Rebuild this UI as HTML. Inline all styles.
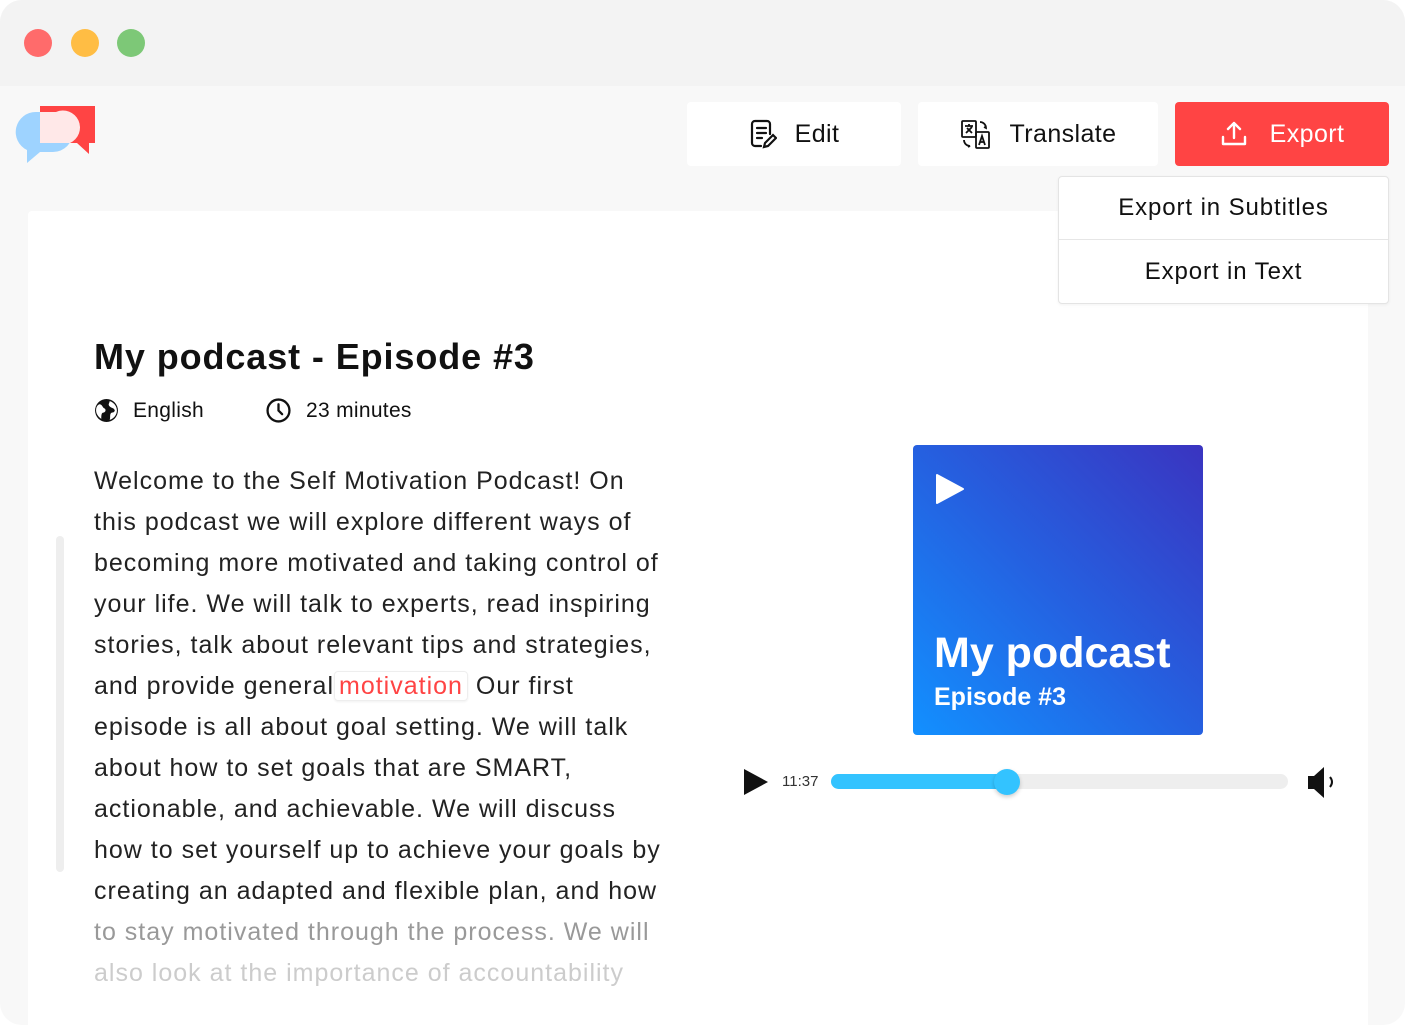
<!DOCTYPE html>
<html><head><meta charset="utf-8"><style>
*{margin:0;padding:0;box-sizing:border-box}
html,body{width:1405px;height:1025px;overflow:hidden;background:#fff;font-family:"Liberation Sans",sans-serif;color:#111}
.win{position:absolute;left:0;top:0;width:1405px;height:1025px;background:#f8f8f8;border-radius:22px;overflow:hidden}
.top{position:absolute;left:0;top:0;width:1405px;height:86px;background:#f3f3f3}
.dot{position:absolute;top:29px;width:28px;height:28px;border-radius:50%}
.btn{position:absolute;top:102px;height:64px;background:#fff;border-radius:4px;font-size:25px;display:flex;align-items:center;justify-content:center;gap:18px;letter-spacing:0.4px}
.card{position:absolute;left:28px;top:211px;width:1340px;height:830px;background:#fff;border-radius:4px}
.dd{position:absolute;left:1058px;top:176px;width:331px;height:128px;background:#fff;border:1px solid #e4e4e4;border-radius:4px;box-shadow:0 1px 3px rgba(0,0,0,.05)}
.dd div{height:63px;display:flex;align-items:center;justify-content:center;font-size:24px;letter-spacing:0.9px}
.txt{position:absolute;left:94px;top:461px;font-size:25px;letter-spacing:1px;line-height:41px;color:#222;white-space:nowrap}
.mot{color:#ff4444;border:1px solid #eee;border-radius:4px;padding:0 4px;box-shadow:0 1px 2px rgba(0,0,0,.06)}
</style></head><body>
<div class="win">
<div class="top"></div>
<div class="dot" style="left:24px;background:#ff6b6b"></div>
<div class="dot" style="left:71px;background:#ffbd44"></div>
<div class="dot" style="left:117px;background:#7dc877"></div>
<svg style="position:absolute;left:0;top:100px" width="100" height="70" viewBox="0 100 100 70">
<path d="M40 106H95V143H89V154L77 143H40Z" fill="#ff4444"/>
<path d="M36 112H53A20 20 0 0 1 53 152H40L27 163V150A20 20 0 0 1 36 112Z" fill="#9ed3ff"/>
<path d="M40 112H56A17 17 0 0 1 70 143H40Z" fill="#ffe8e8"/>
</svg>
<div class="btn" style="left:687px;width:214px"><svg width="28" height="30" viewBox="0 0 28 30" fill="none" stroke="#111" stroke-width="2.2" stroke-linecap="round"><path d="M12 27H6a3 3 0 0 1-3-3V5a3 3 0 0 1 3-3h12a3 3 0 0 1 3 3v10"/><path d="M8 9h9M8 14h9M8 19h5"/><path d="M15 28l1-4 8-8 3 3-8 8z"/></svg>Edit</div>
<div class="btn" style="left:918px;width:240px"><svg width="32" height="32" viewBox="0 0 32 32" fill="none" stroke="#111" stroke-width="1.8"><rect x="2" y="3" width="14" height="16" rx="1"/><rect x="16" y="14" width="13" height="16" rx="1"/><path d="M5 8h8M9 6v2M6 15l6-6M7 10l5 5"/><path d="M19 27l3-9 3 9M20 24h4"/><path d="M20 4a6 6 0 0 1 6 6l-2-1M4 22a6 6 0 0 0 6 6l-2 1"/></svg>Translate</div>
<div class="btn" style="left:1175px;width:214px;background:#ff4444;color:#fff;gap:22px"><svg width="28" height="28" viewBox="0 0 28 28" fill="none" stroke="#fff" stroke-width="2.4" stroke-linecap="round" stroke-linejoin="round"><path d="M14 18V3M8 9l6-6 6 6M3 17v7h22v-7"/></svg>Export</div>
<div class="card"></div>
<div class="dd"><div style="border-bottom:1px solid #e6e6e6">Export in Subtitles</div><div>Export in Text</div></div>
<div style="position:absolute;left:94px;top:336px;font-size:36px;font-weight:bold;letter-spacing:0.9px">My podcast - Episode #3</div>
<svg style="position:absolute;left:94px;top:398px" width="25" height="25" viewBox="0 0 24 24"><circle cx="12" cy="12" r="11" fill="#111"/><path d="M5 6c3 0 3 3 5 4s1 4-1 4-2 3-2 6c-3-2-5-5-5-8 0-3 1-5 3-6zM15 3c0 2-2 3 0 5s4 1 5 4c-1 3-3 1-4 3s0 4-1 6c4-1 7-5 7-9 0-4-3-8-7-9z" fill="#fff"/></svg>
<div style="position:absolute;left:133px;top:399px;font-size:21px;letter-spacing:0.3px">English</div>
<svg style="position:absolute;left:266px;top:398px" width="25" height="25" viewBox="0 0 24 24" fill="none" stroke="#111" stroke-width="2.2" stroke-linecap="round"><circle cx="12" cy="12" r="10.5"/><path d="M12 6v6l3.5 3.5"/></svg>
<div style="position:absolute;left:306px;top:399px;font-size:21px;letter-spacing:0.3px">23 minutes</div>
<div style="position:absolute;left:56px;top:536px;width:8px;height:336px;background:#eee;border-radius:4px"></div>
<div class="txt">Welcome to the Self Motivation Podcast! On<br>this podcast we will explore different ways of<br>becoming more motivated and taking control of<br>your life. We will talk to experts, read inspiring<br>stories, talk about relevant tips and strategies,<br>and provide general<span class="mot">motivation</span> Our first<br>episode is all about goal setting. We will talk<br>about how to set goals that are SMART,<br>actionable, and achievable. We will discuss<br>how to set yourself up to achieve your goals by<br>creating an adapted and flexible plan, and how<br><span style="color:#999">to stay motivated through the process. We will</span><br><span style="color:#ccc">also look at the importance of accountability</span></div>
<div style="position:absolute;left:913px;top:445px;width:290px;height:290px;border-radius:4px;background:linear-gradient(45deg,#1290ff 0%,#2560e0 50%,#3a34c0 100%)">
<svg style="position:absolute;left:22px;top:28px" width="30" height="32"><path d="M2 2L28 16L2 30Z" fill="#fff" stroke="#fff" stroke-linejoin="round" stroke-width="2"/></svg>
<div style="position:absolute;left:21px;top:184px;color:#fff;font-size:43px;font-weight:bold;letter-spacing:0px">My podcast</div>
<div style="position:absolute;left:21px;top:238px;color:#fff;font-size:25px;font-weight:bold">Episode #3</div>
</div>
<svg style="position:absolute;left:743px;top:768px" width="26" height="28"><path d="M1 1L25 14L1 27Z" fill="#111"/></svg>
<div style="position:absolute;left:782px;top:773px;font-size:15px;color:#333">11:37</div>
<div style="position:absolute;left:831px;top:774px;width:457px;height:15px;border-radius:8px;background:#eee"></div>
<div style="position:absolute;left:831px;top:774px;width:180px;height:15px;border-radius:8px;background:#33c3ff"></div>
<div style="position:absolute;left:994px;top:769px;width:26px;height:26px;border-radius:50%;background:#33c3ff;box-shadow:0 2px 4px rgba(0,0,0,.2)"></div>
<svg style="position:absolute;left:1306px;top:765px" width="34" height="34" viewBox="0 0 34 34"><path d="M2 11h6L18 2v31L8 24H2z" fill="#111"/><path d="M24 12q4 5 0 10" stroke="#111" stroke-width="2" fill="none"/></svg>
</div>
</body></html>
